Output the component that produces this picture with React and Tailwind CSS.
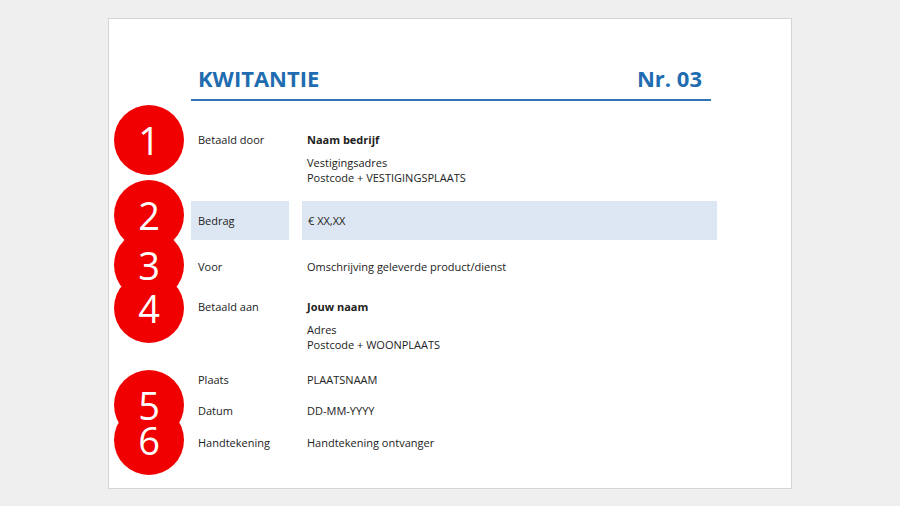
export default function App() {
  const f = { fontFamily: '"Open Sans", "Liberation Sans", sans-serif' };
  const circles = [
    [140, "1"], [215, "2"], [265, "3"], [308, "4"], [405, "5"], [440, "6"],
  ];
  return (
    <div className="w-[900px] h-[506px] bg-[#efefef] relative overflow-hidden" style={f}>
      <div className="absolute left-[108px] top-[18px] w-[684px] h-[471px] bg-white border border-[#d4d4d4]">
        <div className="ml-[82px] w-[520px] mt-[44px] flex justify-between items-end px-[7px] pb-[6px] border-b-2 border-[#2f75b5]">
          <span className="text-[22px] font-bold text-[#1f6cb0] leading-[30px]">KWITANTIE</span>
          <span className="text-[22px] font-bold text-[#1f6cb0] leading-[30px] mr-[2px]">Nr. 03</span>
        </div>
        <div className="ml-[82px] mt-[31px] text-[11px] text-[#222] leading-[15px]">
          <div className="flex">
            <div className="w-[116px] pl-[7px]">Betaald door</div>
            <div>
              <div className="font-bold">Naam bedrijf</div>
              <div className="mt-[8px]">Vestigingsadres</div>
              <div>Postcode + VESTIGINGSPLAATS</div>
            </div>
          </div>
          <div className="flex gap-[13px] mt-[16px] h-[39px]">
            <div className="w-[98px] bg-[#dde7f3] pl-[7px] flex items-center">Bedrag</div>
            <div className="w-[415px] bg-[#dde7f3] pl-[6px] flex items-center">€ XX,XX</div>
          </div>
          <div className="flex mt-[19px]">
            <div className="w-[116px] pl-[7px]">Voor</div>
            <div>Omschrijving geleverde product/dienst</div>
          </div>
          <div className="flex mt-[25px]">
            <div className="w-[116px] pl-[7px]">Betaald aan</div>
            <div>
              <div className="font-bold">Jouw naam</div>
              <div className="mt-[8px]">Adres</div>
              <div>Postcode + WOONPLAATS</div>
            </div>
          </div>
          <div className="flex mt-[20px]">
            <div className="w-[116px] pl-[7px]">Plaats</div>
            <div>PLAATSNAAM</div>
          </div>
          <div className="flex mt-[16px]">
            <div className="w-[116px] pl-[7px]">Datum</div>
            <div>DD-MM-YYYY</div>
          </div>
          <div className="flex mt-[17px]">
            <div className="w-[116px] pl-[7px]">Handtekening</div>
            <div>Handtekening ontvanger</div>
          </div>
        </div>
      </div>
      {circles.map(([y, n]) => (
        <div key={"c" + n} className="absolute left-[114px] w-[70px] h-[70px] rounded-full bg-[#f00000]" style={{ top: y - 35 }} />
      ))}
      {circles.map(([y, n]) => (
        <div key={"t" + n} className="absolute left-[114px] w-[70px] h-[40px] flex items-center justify-center text-white text-[38px] leading-none" style={{ top: y - 20 }}>{n}</div>
      ))}
    </div>
  );
}
